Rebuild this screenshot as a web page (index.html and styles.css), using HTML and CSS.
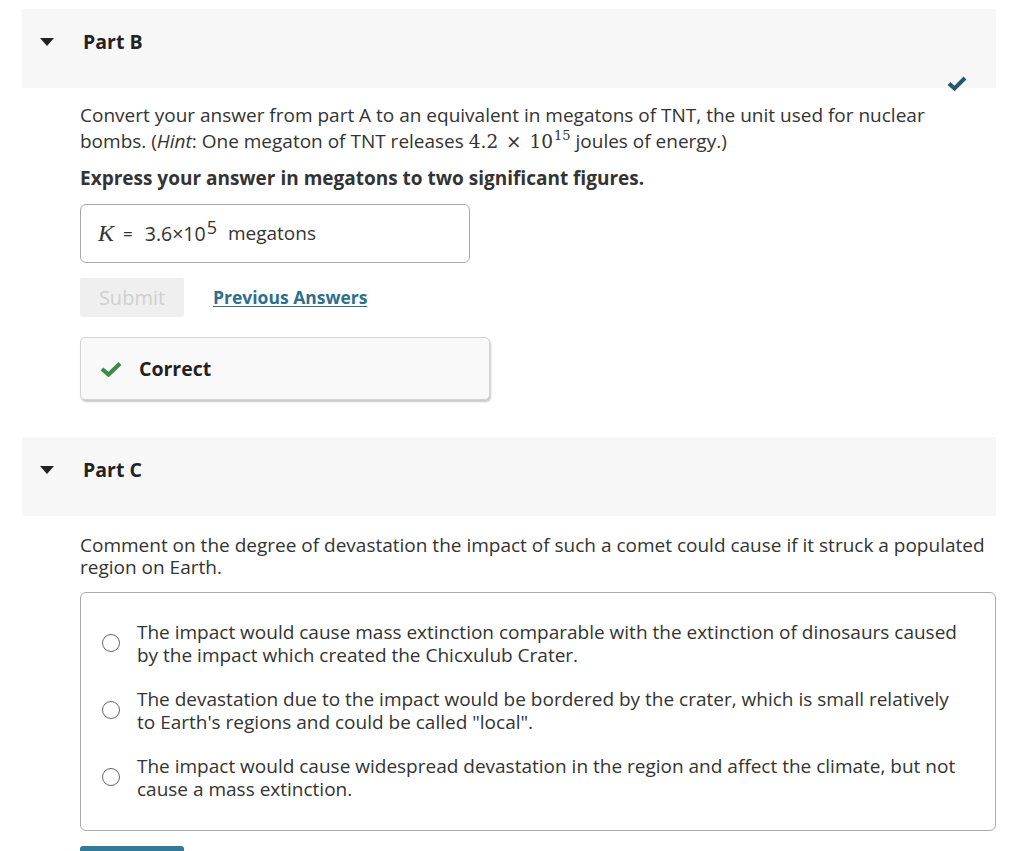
FILE: index.html
```html
<!DOCTYPE html>
<html>
<head>
<meta charset="utf-8">
<link rel="stylesheet" href="styles.css">
</head>
<body>
<div class="page">
  <section class="part">
    <div class="part-header">
      <span class="caret"></span>
      <h2 class="part-title">Part B</h2>
      <svg class="done-check" width="20" height="16" viewBox="0 0 20 16"><path d="M2 8.5 L7.5 13.5 L18 3" fill="none" stroke="#24586a" stroke-width="4" stroke-linejoin="miter"/></svg>
    </div>
    <div class="part-body">
      <p class="prompt"><span class="line">Convert your answer from part A to an equivalent in megatons of TNT, the unit used for nuclear</span><span class="line">bombs. (<i>Hint</i>: One megaton of TNT releases <span class="math">4.2 <span class="op">×</span> 10<sup class="math-sup">15</sup></span> joules of energy.)</span></p>
      <p class="instr">Express your answer in megatons to two significant figures.</p>
      <div class="answer-box">
        <span class="var">K</span><span class="eq">=</span><span class="val">3.6×10<sup class="val-sup">5</sup></span><span class="unit">megatons</span>
      </div>
      <div class="actions">
        <button class="submit" disabled>Submit</button>
        <a class="prev" href="#">Previous Answers</a>
      </div>
      <div class="feedback">
        <svg class="ok" width="22" height="16" viewBox="0 0 22 16"><path d="M2 8 L8.5 13.5 L20 2.5" fill="none" stroke="#3b8a45" stroke-width="4.2"/></svg>
        <span>Correct</span>
      </div>
    </div>
  </section>

  <section class="part part-c">
    <div class="part-header">
      <span class="caret"></span>
      <h2 class="part-title">Part C</h2>
    </div>
    <div class="part-body">
      <p class="prompt2">Comment on the degree of devastation the impact of such a comet could cause if it struck a populated region on Earth.</p>
      <div class="options">
        <label class="option"><span class="radio"></span><span class="opt-text">The impact would cause mass extinction comparable with the extinction of dinosaurs caused by the impact which created the Chicxulub Crater.</span></label>
        <label class="option"><span class="radio"></span><span class="opt-text">The devastation due to the impact would be bordered by the crater, which is small relatively to Earth's regions and could be called "local".</span></label>
        <label class="option"><span class="radio"></span><span class="opt-text">The impact would cause widespread devastation in the region and affect the climate, but not cause a mass extinction.</span></label>
      </div>
      <div class="submit-blue"></div>
    </div>
  </section>
</div>
</body>
</html>
```

FILE: styles.css
```css
html, body {
  margin: 0;
  padding: 0;
  background: #fff;
}
body {
  font-family: "Open Sans", "Noto Sans", sans-serif;
  color: #333;
  font-size: 19px;
  line-height: 23px;
  height: 851px;
  overflow: hidden;
}
.page {
  padding: 9px 28px 0 22px;
}
.part-header {
  position: relative;
  height: 79px;
  box-sizing: border-box;
  background: #f7f7f7;
  display: flex;
  align-items: center;
  padding-left: 18px;
  padding-bottom: 13px;
}
.caret {
  width: 0;
  height: 0;
  border-left: 7px solid transparent;
  border-right: 7px solid transparent;
  border-top: 8px solid #222;
}
.part-title {
  margin: 0 0 0 29px;
  font-size: 19.5px;
  font-weight: 700;
  color: #222;
  line-height: 24px;
}
.done-check {
  position: absolute;
  right: 29px;
  bottom: -3px;
}
.part-body {
  padding-left: 58px;
}
.prompt {
  margin: 14px 0 0;
  line-height: 26px;
}
.prompt .line {
  display: block;
  height: 26px;
}
.math {
  font-family: "DejaVu Serif", "Liberation Serif", serif;
  font-size: 18.5px;
  line-height: 20px;
}
.math .op {
  margin: 0 2px;
}
.math-sup {
  font-size: 13px;
  line-height: 0;
  vertical-align: 8px;
  margin-left: 1px;
}
.instr {
  margin: 13px 0 0;
  font-weight: 700;
}
.answer-box {
  margin-top: 14px;
  width: 390px;
  height: 59px;
  box-sizing: border-box;
  border: 1px solid #a9a9a9;
  border-radius: 6px;
  display: flex;
  align-items: center;
  padding-left: 17px;
}
.var {
  font-family: "Liberation Serif", "DejaVu Serif", serif;
  font-style: italic;
  font-size: 24px;
  color: #333;
}
.eq {
  margin: 0 12px 0 9px;
  font-size: 17px;
}
.val {
  font-size: 19.5px;
}
.val-sup {
  font-size: 18px;
  line-height: 0;
  vertical-align: 7px;
  margin-left: 1px;
}
.unit {
  margin-left: 11px;
}
.actions {
  margin-top: 15px;
  display: flex;
  align-items: center;
}
.submit {
  width: 104px;
  height: 39px;
  border: none;
  border-radius: 2px;
  background: #efefef;
  color: #cfcfcf;
  font-family: inherit;
  font-size: 20px;
  padding: 0;
}
.prev {
  margin-left: 29px;
  font-size: 17.5px;
  color: #2f6e8e;
  font-weight: 700;
  text-decoration: underline;
  text-underline-offset: 2px;
}
.feedback {
  margin-top: 20px;
  width: 410px;
  height: 63px;
  box-sizing: border-box;
  border: 1px solid #d4d4d4;
  border-radius: 5px;
  background: #f9f9f9;
  box-shadow: 1px 2px 2px rgba(0,0,0,0.22);
  display: flex;
  align-items: center;
  padding-left: 19px;
  font-size: 19.5px;
  font-weight: 700;
  color: #222;
}
.feedback .ok {
  margin-right: 17px;
}
.part-c {
  margin-top: 37px;
}
.prompt2 {
  margin: 18px 0 0;
  line-height: 22px;
}
.options {
  margin-top: 14px;
  border: 1px solid #aaa;
  border-radius: 6px;
  padding: 28px 30px 29px 21px;
  display: flex;
  flex-direction: column;
  gap: 21px;
}
.option {
  display: flex;
  align-items: flex-start;
}
.radio {
  flex: none;
  width: 16px;
  height: 16px;
  border: 1.5px solid #666;
  border-radius: 50%;
  margin-top: 13px;
  margin-right: 17px;
}
.opt-text {
  line-height: 23px;
}
.submit-blue {
  margin-top: 15px;
  width: 104px;
  height: 40px;
  border-radius: 3px;
  background: #337a9a;
}
```
